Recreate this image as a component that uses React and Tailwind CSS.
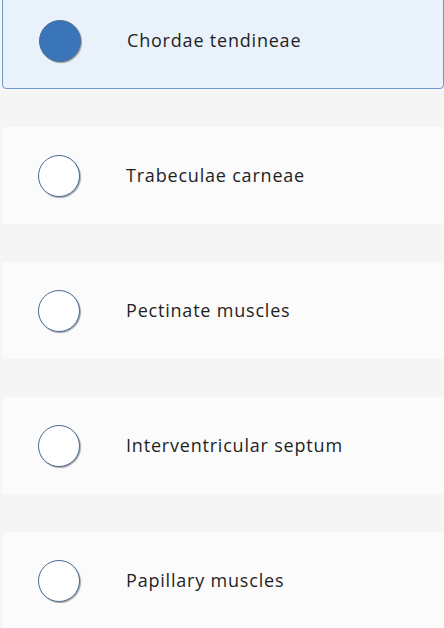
const options = [
  { label: 'Chordae tendineae', selected: true },
  { label: 'Trabeculae carneae' },
  { label: 'Pectinate muscles' },
  { label: 'Interventricular septum' },
  { label: 'Papillary muscles' },
];

const Option = ({ label, selected }) => (
  <div
    className={`flex h-[97px] items-center rounded-[4px] pl-[36px] ${
      selected ? 'border border-[#6f9ad0] bg-[#e9f1fb]' : 'bg-[#fbfbfb]'
    }`}
  >
    <div
      className={`h-[42px] w-[42px] shrink-0 rounded-full border border-[#4a6d94] shadow-[1px_1px_1px_rgba(0,0,0,0.35)] ${
        selected ? 'bg-[#3a74b9]' : 'bg-white'
      }`}
    />
    <span className="ml-[46px] -mt-[1px] text-[18px] tracking-[0.8px] text-[#1f1f1f]" style={{ fontFamily: '"Open Sans", Lato, sans-serif' }}>
      {label}
    </span>
  </div>
);

export default function App() {
  return (
    <div className="h-[628px] w-[444px] overflow-hidden bg-[#f5f5f5]">
      <div className="-mt-[8px] ml-[2px] flex flex-col gap-[38px]">
        {options.map((o) => (
          <Option key={o.label} {...o} />
        ))}
      </div>
    </div>
  );
}
